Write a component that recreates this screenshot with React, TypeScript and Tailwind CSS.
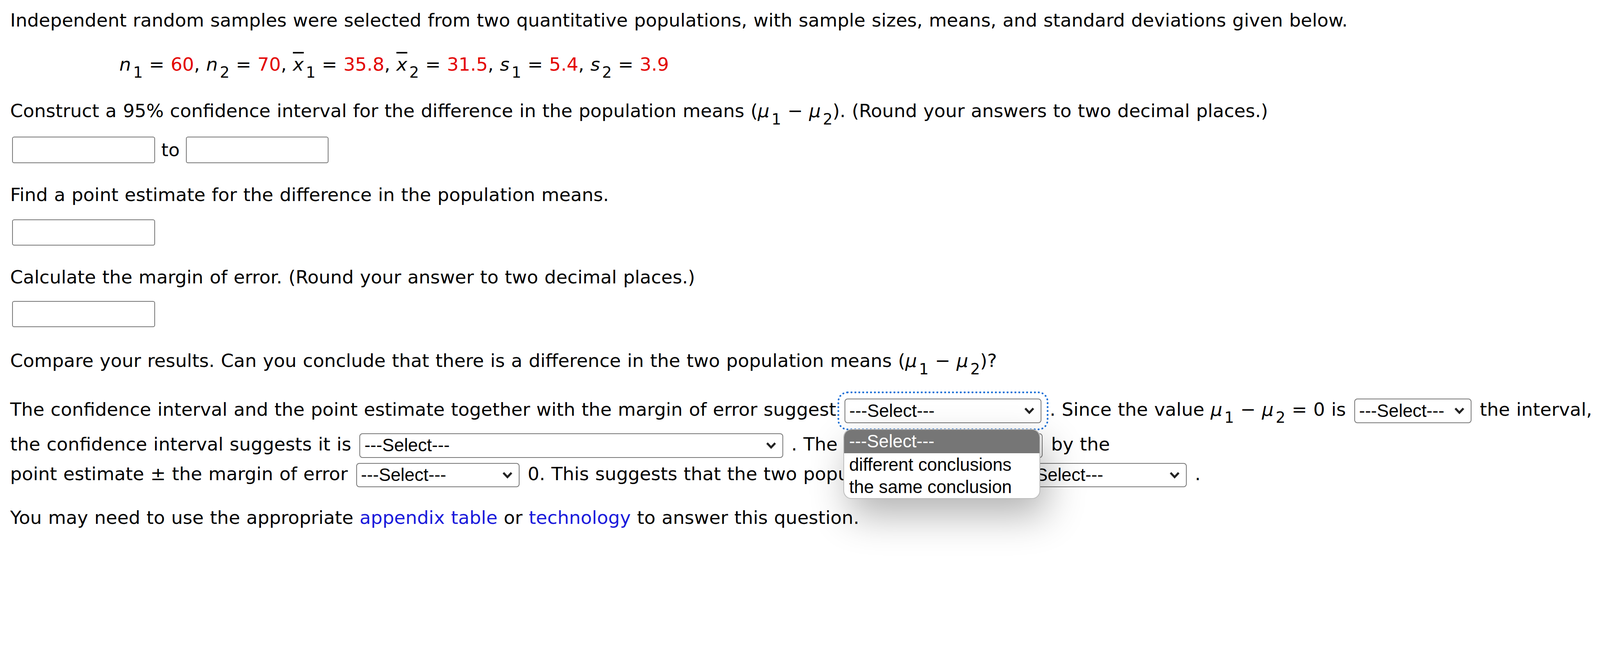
import React, { useEffect, useState } from "react";

// the reference is drawn on a 1568px wide sheet, scaled up to the window
const SHEET_W = 1568;
const sans = "font-['Liberation_Sans',Arial,sans-serif]";

function Sub({ children }: { children: React.ReactNode }) {
  return <span className="ml-[2px] align-[-7px] text-[15px] not-italic">{children}</span>;
}

function Mu({ n }: { n: string }) {
  return (
    <>
      <span className="italic">μ</span>
      <Sub>{n}</Sub>
    </>
  );
}

function Red({ children }: { children: React.ReactNode }) {
  return <span className="text-[#e30000]">{children}</span>;
}

function Chevron() {
  return (
    <svg width="10" height="7" viewBox="0 0 10 7" className="shrink-0">
      <path d="M1 1.2 L5 5.4 L9 1.2" fill="none" stroke="#222" strokeWidth="2" />
    </svg>
  );
}

function Select({ className = "", open = false }: { className?: string; open?: boolean }) {
  return (
    <span
      className={`relative mx-[2px] inline-flex h-[24px] items-center justify-between rounded-[3px] border border-[#767676] bg-white pl-[4px] pr-[6px] align-middle text-[17.5px] leading-none text-black [word-spacing:0] ${sans} ${
        open ? "outline-2 outline-offset-[5px] outline-dotted outline-[#1a6fd6]" : ""
      } ${className}`}
    >
      <span>---Select---</span>
      <Chevron />
      {open && (
        <span className="absolute left-[-2px] top-[29px] z-10 flex w-[193px] flex-col overflow-hidden rounded-[8px] border border-[#bdbdbd] bg-white text-[17.5px] shadow-[6px_16px_38px_rgba(0,0,0,0.3)]">
          <span className="h-[23px] bg-[#767676] pl-[5px] leading-[23px] text-white">---Select---</span>
          <span className="h-[23px] pl-[5px] leading-[23px]">different conclusions</span>
          <span className="h-[21px] pl-[5px] leading-[21px]">the same conclusion</span>
        </span>
      )}
    </span>
  );
}

function Field({ className = "" }: { className?: string }) {
  return (
    <input
      type="text"
      className={`h-[26px] w-[140px] rounded-[2px] border border-[#767676] bg-white ${className}`}
    />
  );
}

export default function App() {
  const [zoom, setZoom] = useState(() => window.innerWidth / SHEET_W);

  useEffect(() => {
    const onResize = () => setZoom(window.innerWidth / SHEET_W);
    window.addEventListener("resize", onResize);
    return () => window.removeEventListener("resize", onResize);
  }, []);

  return (
    <div className="overflow-hidden bg-white">
      <div className="h-[546px] w-[1568px] bg-white" style={{ zoom }}>
        <div className="pl-[10px] pt-[8px] font-['DejaVu_Sans',Verdana,sans-serif] text-[18px] text-black [word-spacing:0.4px]">
          <p className="h-[24px] whitespace-nowrap leading-[24px]">
            Independent random samples were selected from two quantitative populations, with sample sizes, means, and
            standard deviations given below.
          </p>

          <p className="mt-[18px] h-[26px] whitespace-nowrap pl-[107px] leading-[26px]">
            <span className="italic">n</span>
            <Sub>1</Sub> = <Red>60</Red>, <span className="italic">n</span>
            <Sub>2</Sub> = <Red>70</Red>, <span className="italic overline">x</span>
            <Sub>1</Sub> = <Red>35.8</Red>, <span className="italic overline">x</span>
            <Sub>2</Sub> = <Red>31.5</Red>, <span className="italic">s</span>
            <Sub>1</Sub> = <Red>5.4</Red>, <span className="italic">s</span>
            <Sub>2</Sub> = <Red>3.9</Red>
          </p>

          <p className="mt-[21px] h-[24px] whitespace-nowrap leading-[24px]">
            Construct a 95% confidence interval for the difference in the population means (<Mu n="1" /> −{" "}
            <Mu n="2" />
            ). (Round your answers to two decimal places.)
          </p>

          <div className="mt-[13px] flex h-[26px] items-center">
            <Field className="ml-[2px]" />
            <span className="px-[6px]">to</span>
            <Field />
          </div>

          <p className="mt-[19px] h-[24px] whitespace-nowrap leading-[24px]">
            Find a point estimate for the difference in the population means.
          </p>

          <div className="mt-[12px] flex h-[26px] items-center">
            <Field className="ml-[2px]" />
          </div>

          <p className="mt-[19px] h-[24px] whitespace-nowrap leading-[24px]">
            Calculate the margin of error. (Round your answer to two decimal places.)
          </p>

          <div className="mt-[11px] flex h-[26px] items-center">
            <Field className="ml-[2px]" />
          </div>

          <p className="mt-[21px] h-[24px] whitespace-nowrap leading-[24px]">
            Compare your results. Can you conclude that there is a difference in the two population means (
            <Mu n="1" /> − <Mu n="2" />
            )?
          </p>

          <p className="mt-[23px] h-[25px] whitespace-nowrap leading-[25px]">
            The confidence interval and the point estimate together with the margin of error suggest{" "}
            <Select open className="w-[193px]" /> . Since the value <Mu n="1" /> − <Mu n="2" /> = 0 is{" "}
            <Select className="w-[115px]" /> the interval,
          </p>

          <p className="mt-[9px] h-[25px] whitespace-nowrap leading-[25px]">
            the confidence interval suggests it is <Select className="w-[415px]" /> . The{" "}
            <Select className="w-[193px]" /> by the
          </p>

          <p className="mt-[4px] h-[25px] whitespace-nowrap leading-[25px]">
            point estimate ± the margin of error <Select className="w-[160px]" /> 0. This suggests that the two
            population means are <Select className="w-[170px]" /> .
          </p>

          <p className="mt-[19px] h-[24px] whitespace-nowrap leading-[24px]">
            You may need to use the appropriate <span className="text-[#1a1adb]">appendix table</span> or{" "}
            <span className="text-[#1a1adb]">technology</span> to answer this question.
          </p>
        </div>
      </div>
    </div>
  );
}
